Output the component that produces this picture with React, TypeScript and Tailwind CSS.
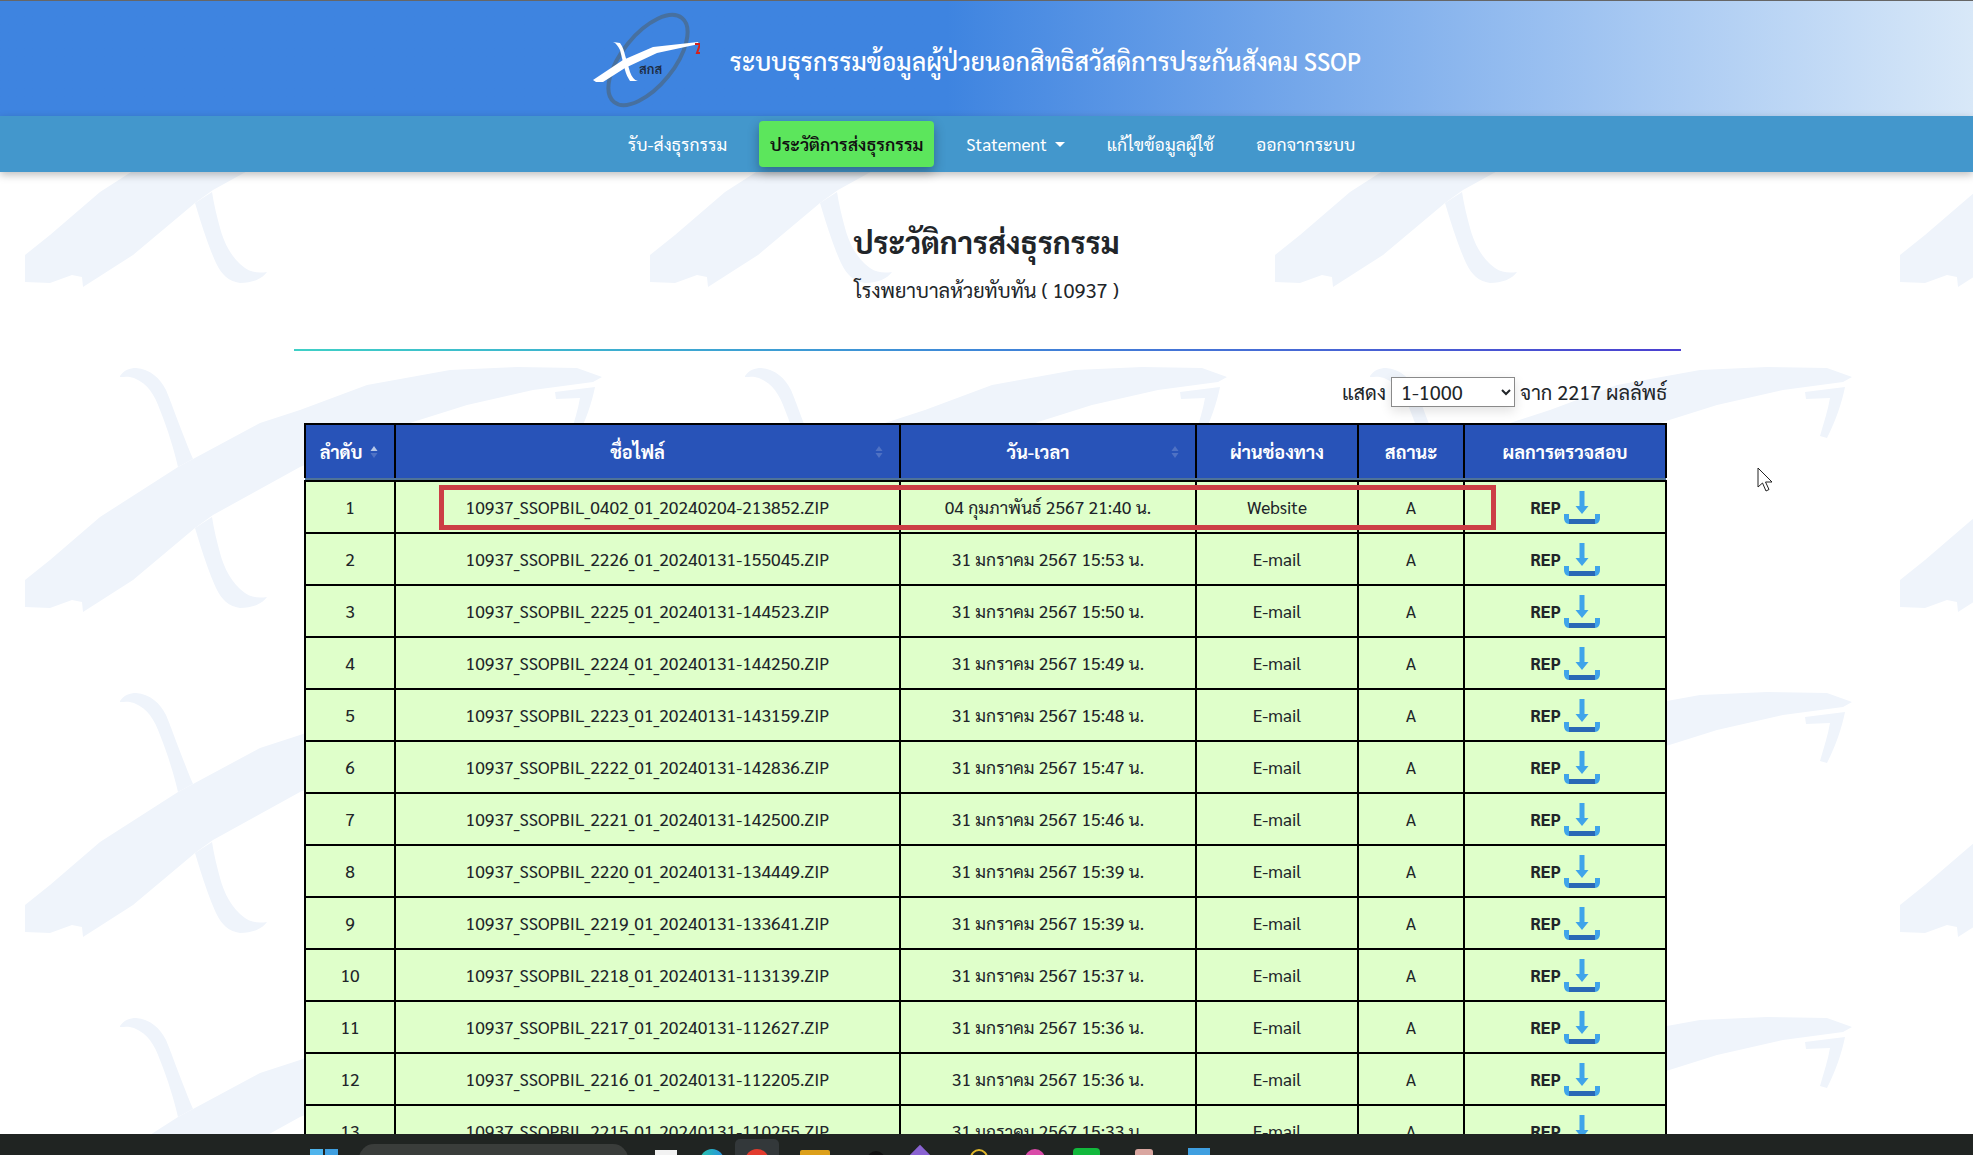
import { FC } from "react";

const rows = [
  ["1", "10937_SSOPBIL_0402_01_20240204-213852.ZIP", "04 กุมภาพันธ์ 2567 21:40 น.", "Website"],
  ["2", "10937_SSOPBIL_2226_01_20240131-155045.ZIP", "31 มกราคม 2567 15:53 น.", "E-mail"],
  ["3", "10937_SSOPBIL_2225_01_20240131-144523.ZIP", "31 มกราคม 2567 15:50 น.", "E-mail"],
  ["4", "10937_SSOPBIL_2224_01_20240131-144250.ZIP", "31 มกราคม 2567 15:49 น.", "E-mail"],
  ["5", "10937_SSOPBIL_2223_01_20240131-143159.ZIP", "31 มกราคม 2567 15:48 น.", "E-mail"],
  ["6", "10937_SSOPBIL_2222_01_20240131-142836.ZIP", "31 มกราคม 2567 15:47 น.", "E-mail"],
  ["7", "10937_SSOPBIL_2221_01_20240131-142500.ZIP", "31 มกราคม 2567 15:46 น.", "E-mail"],
  ["8", "10937_SSOPBIL_2220_01_20240131-134449.ZIP", "31 มกราคม 2567 15:39 น.", "E-mail"],
  ["9", "10937_SSOPBIL_2219_01_20240131-133641.ZIP", "31 มกราคม 2567 15:39 น.", "E-mail"],
  ["10", "10937_SSOPBIL_2218_01_20240131-113139.ZIP", "31 มกราคม 2567 15:37 น.", "E-mail"],
  ["11", "10937_SSOPBIL_2217_01_20240131-112627.ZIP", "31 มกราคม 2567 15:36 น.", "E-mail"],
  ["12", "10937_SSOPBIL_2216_01_20240131-112205.ZIP", "31 มกราคม 2567 15:36 น.", "E-mail"],
  ["13", "10937_SSOPBIL_2215_01_20240131-110255.ZIP", "31 มกราคม 2567 15:33 น.", "E-mail"],
];

// traced from the watermark tile, 625x325
const swoosh =
  "M25 220L50 200L100 157L178 107L193 99L260 63L300 50L367 25L450 10L517 7L577 8L602 17L593 22L533 30L467 45L413 62L300 107L213 155L195 168L133 220L83 252L82 242L72 240L50 248L25 247Z";
const thinTop = "M120 16C124 10 130 8 136 8C150 9 160 18 166 30C172 44 177 60 193 99L178 107C174 90 168 70 160 50C154 34 148 24 134 18C128 16 124 17 120 17Z";
const thinBottom = "M195 168L212 157C214 170 217 182 220 193C224 208 232 224 245 233C252 238 260 238 267 237C262 244 252 248 240 248C228 246 222 240 216 228C210 215 203 195 195 168Z";

const Watermark: FC = () => (
  <svg className="absolute inset-0 h-full w-full" aria-hidden="true">
    <defs>
      <pattern id="mark" width="625" height="325" x="0" y="-137" patternUnits="userSpaceOnUse">
        <path d={swoosh} fill="#eff4fb" />
        <path d={thinTop} fill="#eff4fb" />
        <path d={thinBottom} fill="#eff4fb" />
        <path d="M555 32L595 27C592 42 586 60 577 78L570 76C574 62 578 50 580 38L556 39Z" fill="#eff4fb" />
      </pattern>
    </defs>
    <rect width="100%" height="100%" fill="url(#mark)" />
  </svg>
);

const Logo: FC = () => (
  <svg width="110" height="100" viewBox="20 9 110 100" className="shrink-0">
    <ellipse cx="78" cy="60" rx="26" ry="54" transform="rotate(39 78 60)" fill="none" stroke="#47709f" strokeWidth="4" />
    <path d="M23 80L53 60L83 47L128 42L129 44L87 53L55 68L33 82L26 82Z" fill="#fff" />
    <path d="M43 42L50 43C53 47 54 51 55 55L60 72C62 77 64 80 68 81H60C58 78 56 74 55 70L50 50C48 46 46 43 43 42Z" fill="#fff" />
    <text x="69" y="74" fontSize="13" fontWeight="600" fill="#1d2c44" fontFamily="Sarabun, Noto Sans Thai, Noto Sans, sans-serif">สกส</text>
    <path d="M125 44H130L127 53H130" fill="none" stroke="#d3221c" strokeWidth="2" />
  </svg>
);

const DownloadIcon: FC = () => (
  <svg width="36" height="33" viewBox="0 0 36 33" className="shrink-0">
    <path d="M15.5 0H20.5V15H24.5L18 23L11.5 15H15.5Z" fill="#3fa4ea" />
    <path d="M0 23H5V28H31V23H36V27C36 30 34 33 31 33H5C2 33 0 30 0 27Z" fill="#3fa4ea" />
    <rect x="5" y="28" width="26" height="5" fill="#2a68b5" />
  </svg>
);

const SortCaret: FC<{ active?: boolean }> = ({ active }) => (
  <svg width="8" height="14" viewBox="0 0 8 14" className="absolute right-[16px] top-[20px]">
    <path d="M4 1L7.5 6H0.5Z" fill={active ? "#b9c9e8" : "#4f72c4"} />
    <path d="M4 13L0.5 8H7.5Z" fill="#4f72c4" />
  </svg>
);

const navItems = ["รับ-ส่งธุรกรรม", "ประวัติการส่งธุรกรรม", "Statement", "แก้ไขข้อมูลผู้ใช้", "ออกจากระบบ"];

const thClass = "relative border-2 border-b-0 border-black bg-[#2853b8] align-middle text-[18px] font-bold text-white";
const tdClass = "border-2 border-black text-center text-[17.5px] text-[#212529]";

export default function App() {
  return (
    <div className="flex h-screen flex-col overflow-hidden bg-white font-['Sarabun','Noto_Sans_Thai','Noto_Sans',sans-serif]">
      <header className="flex h-[116px] shrink-0 items-center justify-center gap-[30px] border-t border-[#666] bg-gradient-to-r from-[#3e84e0] from-48% to-[#d8e8f8] pr-[22px]">
        <Logo />
        <h1 className="pt-[6px] text-[24.7px] font-medium text-white">ระบบธุรกรรมข้อมูลผู้ป่วยนอกสิทธิสวัสดิการประกันสังคม SSOP</h1>
      </header>

      <nav className="relative z-10 flex h-[56px] shrink-0 items-center justify-center bg-[#4397cc] pl-[10px] shadow-[0_3px_8px_rgba(0,0,0,0.25)]">
        {navItems.map((item, i) =>
          i === 1 ? (
            <a key={item} className="mx-[32px] flex h-[46px] w-[175px] items-center justify-center rounded-[4px] bg-[#5ce65c] text-[17.5px] font-semibold text-[#111] shadow-[0_5px_12px_rgba(0,0,0,0.3)]">
              {item}
            </a>
          ) : (
            <a key={item} className={`flex items-center gap-[8px] text-[17.5px] text-white ${i === 3 ? "mx-[42px]" : ""}`}>
              {item}
              {item === "Statement" && <span className="border-x-[5px] border-t-[5px] border-x-transparent border-t-white" />}
            </a>
          )
        )}
      </nav>

      <main className="relative min-h-0 flex-1 overflow-hidden">
        <Watermark />
        <div className="relative ml-[294px] w-[1387px] pt-[48px]">
          <h2 className="pr-[2px] text-center text-[30px] leading-[44px] font-bold text-[#212529]">ประวัติการส่งธุรกรรม</h2>
          <p className="mt-[11px] pr-[2px] text-center text-[20px] leading-[30px] text-[#212529]">โรงพยาบาลห้วยทับทัน ( 10937 )</p>
          <div className="mt-[44px] h-[2px] bg-gradient-to-r from-[#3fd0c6] via-[#3f86d8] to-[#4b3fd0] shadow-[0_10px_20px_rgba(0,0,0,0.03)]" />

          <div className="mt-[25px] flex h-[32px] items-center justify-end gap-[5px] pr-[14px] text-[20px] text-[#212529]">
            <span>แสดง</span>
            <select defaultValue="1-1000" className="h-[30px] w-[124px] border border-[#8a8a8a] bg-white pl-[5px] text-[20px] shadow-[0_4px_12px_rgba(0,0,0,0.12)]">
              <option>1-1000</option>
              <option>1001-2000</option>
              <option>2001-2217</option>
            </select>
            <span>จาก 2217 ผลลัพธ์</span>
          </div>

          <table className="mt-[15px] ml-[10px] w-[1361px] table-fixed border-collapse">
            <colgroup>
              <col className="w-[90px]" />
              <col className="w-[505px]" />
              <col className="w-[296px]" />
              <col className="w-[162px]" />
              <col className="w-[106px]" />
              <col className="w-[202px]" />
            </colgroup>
            <thead>
              <tr className="h-[54px]">
                <th className={`${thClass} pr-[18px]`}>ลำดับ<SortCaret active /></th>
                <th className={`${thClass} pr-[20px]`}>ชื่อไฟล์<SortCaret /></th>
                <th className={`${thClass} pr-[20px]`}>วัน-เวลา<SortCaret /></th>
                <th className={thClass}>ผ่านช่องทาง</th>
                <th className={thClass}>สถานะ</th>
                <th className={thClass}>ผลการตรวจสอบ</th>
              </tr>
              <tr className="h-[3px]">
                <th colSpan={6} className="bg-[#4f7398] p-0" />
              </tr>
            </thead>
            <tbody className="bg-[#dfffca]">
              {rows.map(([no, file, date, channel]) => (
                <tr key={no} className="h-[52px]">
                  <td className={tdClass}>{no}</td>
                  <td className={tdClass}>{file}</td>
                  <td className={tdClass}>{date}</td>
                  <td className={tdClass}>{channel}</td>
                  <td className={tdClass}>A</td>
                  <td className={tdClass}>
                    <span className="flex items-center justify-center gap-[3px] font-bold">
                      REP
                      <DownloadIcon />
                    </span>
                  </td>
                </tr>
              ))}
            </tbody>
          </table>
          <div className="pointer-events-none absolute left-[145px] top-[313px] h-[45px] w-[1057px] border-[5px] border-[#cc3e45]" />
        </div>
        <svg width="16" height="25" viewBox="0 0 16 25" className="absolute left-[1757px] top-[295px]">
          <path d="M1 1V20L5.5 16L9 24L12 22.5L8.5 15H15Z" fill="#fff" stroke="#222" strokeWidth="1" />
        </svg>
      </main>

      <footer className="flex h-[21px] shrink-0 items-start overflow-hidden bg-[#202422] pl-[310px]">
        <div className="mt-[15px] grid h-[28px] w-[28px] grid-cols-2 gap-[2px]">
          <span className="bg-[#4fb4ec]" />
          <span className="bg-[#3f9fe0]" />
        </div>
        <div className="mt-[10px] ml-[21px] h-[30px] w-[269px] rounded-t-[15px] bg-[#3a3d3b]" />
        <div className="mt-[16px] ml-[27px] h-[20px] w-[22px] bg-[#f2f2f2]" />
        <div className="mt-[15px] ml-[23px] h-[24px] w-[24px] rounded-full bg-gradient-to-r from-[#2cc3a8] to-[#2b8fe0]" />
        <div className="mt-[5px] ml-[11px] flex h-[30px] w-[44px] justify-center rounded-t-[5px] bg-[#33383a] pt-[10px]">
          <span className="h-[24px] w-[24px] rounded-full bg-[#e23b2e]" />
        </div>
        <div className="mt-[16px] ml-[21px] h-[20px] w-[30px] rounded-t-[2px] bg-[#dc9f1a]" />
        <div className="mt-[17px] ml-[37px] h-[18px] w-[18px] rounded-full bg-[#111]" />
        <div className="mt-[15px] ml-[25px] h-[20px] w-[20px] rotate-45 bg-[#8a63d2]" />
        <div className="mt-[15px] ml-[40px] h-[20px] w-[18px] rounded-t-full border-2 border-[#e0b72a]" />
        <div className="mt-[15px] ml-[37px] h-[20px] w-[20px] rounded-full bg-[#d94aa8]" />
        <div className="mt-[14px] ml-[28px] h-[20px] w-[27px] rounded-[4px] bg-[#12b83c]" />
        <div className="mt-[15px] ml-[35px] h-[20px] w-[18px] rounded-[3px] bg-[#d9a6a0]" />
        <div className="mt-[14px] ml-[35px] h-[20px] w-[22px] bg-[#3f9fe0]" />
      </footer>
    </div>
  );
}
